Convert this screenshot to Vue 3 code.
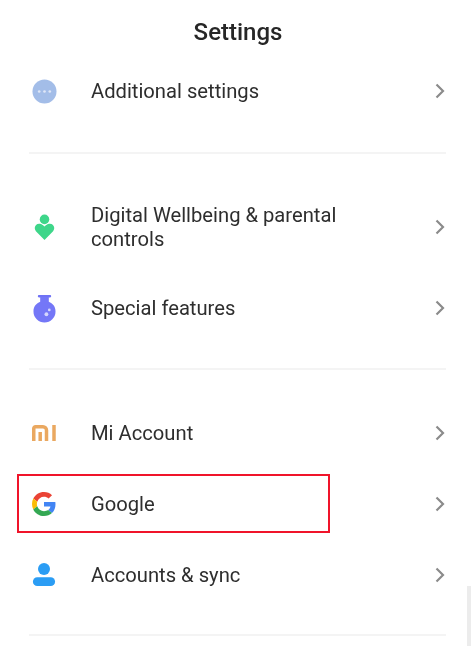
<template>
  <div class="screen">
    <h1 class="title">Settings</h1>

    <div v-for="(group, i) in groups" :key="i" class="group" :class="'group-' + i">
      <div v-for="row in group" :key="row.label" class="row" :class="row.cls">
        <span class="icon">
          <svg v-if="row.icon === 'more'" width="25" height="25" viewBox="0 0 26 26">
            <circle cx="13" cy="13" r="12.500" fill="#a3bde8" />
            <circle cx="7.500" cy="13" r="1.400" fill="#dfe7f7" />
            <circle cx="13" cy="13" r="1.400" fill="#dfe7f7" />
            <circle cx="18.500" cy="13" r="1.400" fill="#dfe7f7" />
          </svg>
          <svg v-else-if="row.icon === 'wellbeing'" width="21" height="27" viewBox="0 0 22 28">
            <circle cx="11" cy="5.500" r="5" fill="#3ed68a" />
            <path d="M11 27 L2 18 C-1 14 2 9.500 6 10 C8 10.300 9.500 11.500 11 13 C12.500 11.500 14 10.300 16 10 C20 9.500 23 14 20 18 Z" fill="#3ed68a" />
          </svg>
          <svg v-else-if="row.icon === 'flask'" width="23" height="29" viewBox="0 0 24 30">
            <rect x="5" y="1" width="14" height="2.500" rx="1.200" fill="#6f72f5" />
            <path d="M7.500 3 H16.500 V8 C20.500 9.500 23.500 13 23.500 18 A11.500 11.500 0 0 1 0.500 18 C0.500 13 3.500 9.500 7.500 8 Z" fill="#7477f7" />
            <circle cx="17" cy="16.500" r="1.400" fill="#d5d6fd" />
            <circle cx="14" cy="21" r="2" fill="#d5d6fd" />
          </svg>
          <svg v-else-if="row.icon === 'mi'" width="24" height="16" viewBox="0 0 24 16">
            <path d="M1.750 16 V3.500 A1.750 1.750 0 0 1 3.500 1.750 H11 A3.500 3.500 0 0 1 14.500 5.250 V16" fill="none" stroke="#eaa860" stroke-width="3.500" />
            <path d="M8.200 7 V16" fill="none" stroke="#eaa860" stroke-width="3.500" />
            <path d="M22 0 V16" fill="none" stroke="#eaa860" stroke-width="3.500" />
          </svg>
          <svg v-else-if="row.icon === 'google'" width="24" height="24" viewBox="0 0 48 48">
            <path fill="#EA4335" d="M24 9.500c3.540 0 6.710 1.220 9.210 3.600l6.850-6.850C35.900 2.380 30.470 0 24 0 14.620 0 6.510 5.380 2.560 13.220l7.980 6.190C12.430 13.720 17.740 9.500 24 9.500z" />
            <path fill="#4285F4" d="M46.980 24.550c0-1.570-.15-3.090-.38-4.550H24v9.020h12.940c-.58 2.960-2.260 5.480-4.780 7.180l7.730 6c4.510-4.180 7.090-10.360 7.090-17.650z" />
            <path fill="#FBBC05" d="M10.530 28.590c-.48-1.450-.76-2.990-.76-4.590s.27-3.140.76-4.590l-7.980-6.190C.92 16.460 0 20.120 0 24c0 3.880.92 7.540 2.560 10.780l7.970-6.190z" />
            <path fill="#34A853" d="M24 48c6.480 0 11.930-2.130 15.890-5.810l-7.730-6c-2.150 1.450-4.920 2.300-8.160 2.300-6.260 0-11.570-4.220-13.470-9.910l-7.980 6.190C6.510 42.620 14.620 48 24 48z" />
          </svg>
          <svg v-else width="24" height="25" viewBox="0 0 26 26">
            <circle cx="13" cy="7" r="6.500" fill="#2b9df4" />
            <rect x="1" y="16" width="24" height="9.500" rx="4.700" fill="#2b9df4" />
          </svg>
        </span>
        <span class="label">{{ row.label }}</span>
        <svg class="chevron" width="12" height="16" viewBox="0 0 12 16">
          <path d="M2.500 1.500 L9 8 L2.500 14.500" fill="none" stroke="#8b8b8b" stroke-width="2.200" />
        </svg>
      </div>
    </div>

    <div class="highlight"></div>
    <div class="scrollbar"></div>
  </div>
</template>

<script setup>
const groups = [
  [{ label: 'Additional settings', icon: 'more', cls: 'row-a' }],
  [
    { label: 'Digital Wellbeing & parental controls', icon: 'wellbeing', cls: 'row-b' },
    { label: 'Special features', icon: 'flask', cls: 'row-c' }
  ],
  [
    { label: 'Mi Account', icon: 'mi', cls: 'row-d' },
    { label: 'Google', icon: 'google', cls: 'row-d' },
    { label: 'Accounts & sync', icon: 'person', cls: 'row-d' }
  ]
]
</script>

<style scoped>
.screen {
  position: relative;
  width: 476px;
  height: 646px;
  overflow: hidden;
  background: #fff;
  font-family: Roboto, "Liberation Sans", sans-serif;
  color: #2e2e2e;
  filter: blur(0.4px);
}

.title {
  margin: 0;
  padding-top: 18px;
  height: 38px;
  line-height: 28px;
  text-align: center;
  font-size: 24px;
  font-weight: 500;
  color: #262626;
}

.group {
  margin-left: 29px;
  margin-right: 30px;
  border-bottom: 2px solid #f4f4f4;
}

.group-0 {
  padding-bottom: 26px;
}

.group-1 {
  padding-top: 31px;
  padding-bottom: 21px;
}

.group-2 {
  padding-top: 27px;
  padding-bottom: 24px;
}

.row {
  display: flex;
  align-items: center;
}

.row-a {
  height: 70px;
}

.row-b {
  height: 84px;
}

.row-c {
  height: 78px;
}

.row-d {
  height: 71px;
}

.icon {
  display: flex;
  justify-content: center;
  align-items: center;
  flex: 0 0 30px;
  margin-right: 32px;
}

.label {
  flex: 1;
  font-size: 20.200px;
  line-height: 24px;
  padding-right: 60px;
}

.chevron {
  flex: none;
}

/* red annotation box around the Google row */
.highlight {
  position: absolute;
  left: 17px;
  top: 474px;
  width: 313px;
  height: 59px;
  box-sizing: border-box;
  border: 2.500px solid #f0142a;
}

.scrollbar {
  position: absolute;
  left: 467px;
  top: 586px;
  width: 4px;
  height: 60px;
  background: #ececec;
}
</style>

<style>
body {
  background: #fff;
}
</style>
